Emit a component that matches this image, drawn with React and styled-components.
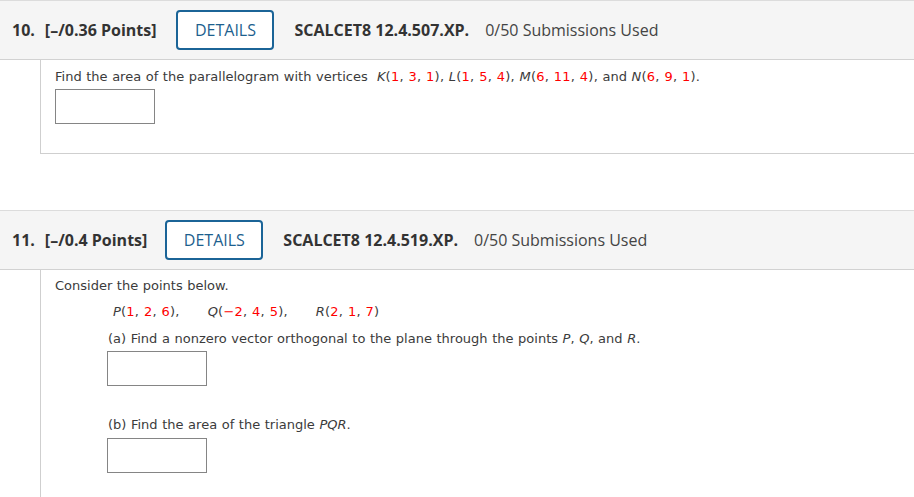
import styled, { createGlobalStyle } from "styled-components";

const Global = createGlobalStyle`
  html, body { margin: 0; padding: 0; background: #fff; }
  body { font-family: "DejaVu Sans", Verdana, sans-serif; color: #3b3b3b; }
`;

const Page = styled.div`
  width: 914px;
  display: flex;
  flex-direction: column;
  gap: 56px;
`;

const Question = styled.section`
  display: flex;
  flex-direction: column;
`;

const Header = styled.div`
  height: 58px;
  background: #f5f5f5;
  border-top: 1px solid #dcdcdc;
  border-bottom: 1px solid #d2d2d2;
  display: flex;
  align-items: center;
  padding-left: 12px;
  font-family: "Open Sans", sans-serif;
  font-size: 16px;
  color: #333;
`;

const Num = styled.span`
  font-weight: 700;
  margin-right: 10px;
`;

const Points = styled.span`
  font-weight: 700;
  margin-right: ${p => p.$gap}px;
`;

const DetailsBtn = styled.button`
  height: 40px;
  width: 98px;
  box-sizing: border-box;
  border: 2px solid #1b6497;
  border-radius: 4px;
  background: #fff;
  color: #1d5f8e;
  font-family: "Open Sans", sans-serif;
  font-size: 16px;
  font-weight: 500;
  margin-right: 20px;
  padding: 0;
`;

const Code = styled.span`
  font-weight: 700;
  margin-right: 16px;
`;

const Subs = styled.span`
  color: #444;
`;

const Body = styled.div`
  margin-left: 40px;
  border-left: 1px solid #cfcfcf;
  border-bottom: ${p => (p.$open ? "none" : "1px solid #cfcfcf")};
  padding: ${p => p.$pad};
  font-size: 13px;
  line-height: 17px;
  word-spacing: 0.45px;
`;

const Line = styled.div`
  padding-left: ${p => p.$indent || 0}px;
  margin-top: ${p => p.$mt || 0}px;
`;

const V = styled.i`
  font-style: italic;
`;

const R = styled.span`
  color: #f00;
`;

const Math = styled.span`
  letter-spacing: 0.2px;
  margin-right: ${p => p.$gap || 0}px;
`;

const Answer = styled.div`
  width: 100px;
  height: 35px;
  box-sizing: border-box;
  border: 1px solid #858585;
  background: #fff;
  margin-left: ${p => p.$indent || 0}px;
  margin-top: ${p => p.$mt || 0}px;
`;

const Pt = ({ name, nums, gap, comma }) => (
  <Math $gap={gap}>
    <V>{name}</V>(<R>{nums[0]}</R>, <R>{nums[1]}</R>, <R>{nums[2]}</R>){comma}
  </Math>
);

export default function App() {
  return (
    <Page>
      <Global />
      <Question>
        <Header>
          <Num>10.</Num>
          <Points $gap={20}>[–/0.36 Points]</Points>
          <DetailsBtn>DETAILS</DetailsBtn>
          <Code>SCALCET8 12.4.507.XP.</Code>
          <Subs>0/50 Submissions Used</Subs>
        </Header>
        <Body $pad="8px 14px 29px">
          <Line>
            Find the area of the parallelogram with vertices&nbsp;{" "}
            <Pt name="K" nums={[1, 3, 1]} comma="," />{" "}
            <Pt name="L" nums={[1, 5, 4]} comma="," />{" "}
            <Pt name="M" nums={[6, 11, 4]} comma="," /> and{" "}
            <Pt name="N" nums={[6, 9, 1]} comma="." />
          </Line>
          <Answer $mt={4} />
        </Body>
      </Question>

      <Question>
        <Header>
          <Num>11.</Num>
          <Points $gap={18}>[–/0.4 Points]</Points>
          <DetailsBtn>DETAILS</DetailsBtn>
          <Code>SCALCET8 12.4.519.XP.</Code>
          <Subs>0/50 Submissions Used</Subs>
        </Header>
        <Body $open $pad="7px 14px 25px">
          <Line>Consider the points below.</Line>
          <Line $indent={58} $mt={9}>
            <Pt name="P" nums={[1, 2, 6]} comma="," gap={28} />
            <Pt name="Q" nums={["−2", 4, 5]} comma="," gap={28} />
            <Pt name="R" nums={[2, 1, 7]} />
          </Line>
          <Line $indent={53} $mt={10}>
            (a) Find a nonzero vector orthogonal to the plane through the points <V>P</V>, <V>Q</V>, and <V>R</V>.
          </Line>
          <Answer $indent={52} $mt={4} />
          <Line $indent={53} $mt={30}>
            (b) Find the area of the triangle <V>PQR</V>.
          </Line>
          <Answer $indent={52} $mt={5} />
        </Body>
      </Question>
    </Page>
  );
}
